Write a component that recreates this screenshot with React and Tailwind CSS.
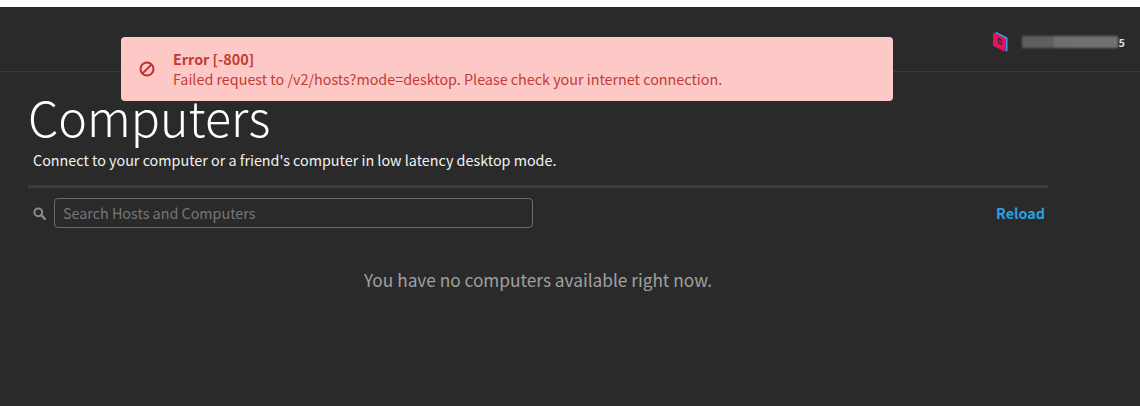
import React from "react";

function Logo() {
  return (
    <svg width="15" height="21" viewBox="0 0 15 21" className="block">
      <path d="M2.5 0.5 L14.5 6.5 V20 L12.5 20.5 V8 L2.5 2.5 Z" fill="#3a9be0" />
      <path d="M0.5 2 L11.8 7.5 V20 L0.5 14.5 Z" fill="#e8125c" stroke="#e8125c" strokeWidth="1" strokeLinejoin="round" />
      <path d="M5 6.5 L9 8.6 V14.3 L5 12.4 Z" fill="#2a3346" />
      <path d="M6.4 8.4 L7.7 9.1 V12.3 L6.4 11.7 Z" fill="#e8125c" />
    </svg>
  );
}

export default function App() {
  return (
    <div className="relative h-[406px] w-[1140px] overflow-hidden bg-white font-['Noto_Sans_CJK_SC',sans-serif]">
      <div className="mt-[7px] h-[399px] bg-[#2a2a2a]">
        <header className="flex h-[65px] items-center justify-end border-b border-[#3a3a3a] pr-[14px] pt-[4px]">
          <div className="flex items-center">
            <Logo />
            <div className="ml-[14px] mr-[1px] mt-[2px] flex items-center">
              <div className="flex h-3 w-[96px] blur-[1px]">
                <div className="h-full w-[32px] bg-[#5f5f5f]" />
                <div className="h-full w-[24px] bg-[#6f6f6f]" />
                <div className="h-full w-[40px] bg-[#717171]" />
              </div>
              <span className="ml-[1px] text-[11px] font-semibold text-[#dddddd]">5</span>
            </div>
          </div>
        </header>

        <main className="ml-[28px] w-[1020px]">
          <h1 className="mt-[16px] text-[48.4px] font-extralight leading-[56px] text-white">Computers</h1>
          <p className="ml-[5px] mt-[6px] text-[14.33px] leading-5 text-[#f2f2f2]">
            Connect to your computer or a friend's computer in low latency desktop mode.
          </p>
          <div className="mt-[15px] h-[3px] bg-[#3c3c3c]" />
          <div className="mt-[10px] flex items-center justify-between">
            <div className="flex items-center">
              <svg width="13" height="13" viewBox="0 0 13 13" className="ml-[5px]">
                <circle cx="5.3" cy="5.3" r="3.9" fill="none" stroke="#8a8a8a" strokeWidth="2" />
                <path d="M8.2 8.2 L11.8 11.8" stroke="#8a8a8a" strokeWidth="2.4" strokeLinecap="round" />
              </svg>
              <div className="ml-[8px] flex h-[30px] w-[479px] items-center rounded-[4px] border border-[#6b6b6b] px-[8px] text-[14.33px] text-[#777777]">
                Search Hosts and Computers
              </div>
            </div>
            <button className="mr-[3px] text-[14.33px] font-bold text-[#2b9fe4]">Reload</button>
          </div>
          <p className="mt-[40px] text-center text-[17.25px] leading-6 text-[#a0a0a0]">
            You have no computers available right now.
          </p>
        </main>
      </div>

      <div className="absolute left-[121px] top-[37px] flex h-[64px] w-[772px] items-center rounded-[4px] bg-[#fdc9c7] pl-[18px] text-[#c43a35]">
        <svg width="16" height="16" viewBox="0 0 16 16">
          <circle cx="8" cy="8" r="6.5" fill="none" stroke="#c0302b" strokeWidth="2" />
          <path d="M3.6 12.4 L12.4 3.6" stroke="#c0302b" strokeWidth="2" />
        </svg>
        <div className="ml-[18px] text-[14.33px] leading-5">
          <div className="font-bold">Error [-800]</div>
          <div>Failed request to /v2/hosts?mode=desktop. Please check your internet connection.</div>
        </div>
      </div>
    </div>
  );
}
